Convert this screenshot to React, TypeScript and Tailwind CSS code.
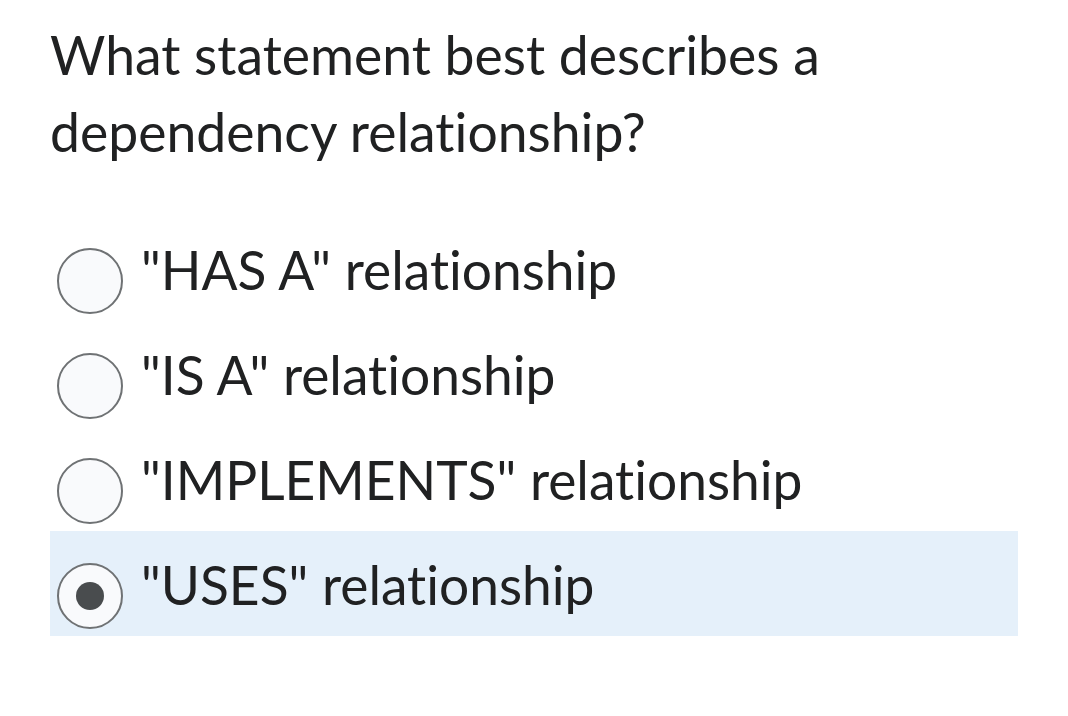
const options = [
  { id: "has-a", label: '"HAS A" relationship' },
  { id: "is-a", label: '"IS A" relationship' },
  { id: "implements", label: '"IMPLEMENTS" relationship' },
  { id: "uses", label: '"USES" relationship' },
]

function Radio({ checked }: { checked: boolean }) {
  return (
    <span className="mt-[32px] flex h-[66px] w-[66px] shrink-0 items-center justify-center rounded-full border-2 border-[#6f7274] bg-[#f9fafc]">
      {checked && <span className="h-[28px] w-[28px] rounded-full bg-[#494c4e]" />}
    </span>
  )
}

export default function App() {
  const selected = "uses"

  return (
    <section
      className="min-h-[716px] w-[1068px] bg-white px-[50px] pt-[16px] text-[#202122] [font-variant-ligatures:none]"
      style={{ fontFamily: "Lato, 'Open Sans', sans-serif" }}
    >
      <h1 className="w-[840px] text-[53.5px] font-normal leading-[77px]">
        What statement best describes a dependency relationship?
      </h1>

      <div className="mt-[46px] w-[968px]">
        {options.map((opt) => (
          <label
            key={opt.id}
            className={
              "flex h-[105px] items-start gap-[18px] pl-[7px] " +
              (opt.id === selected ? "bg-[#e5f0fa]" : "")
            }
          >
            <Radio checked={opt.id === selected} />
            <span className="self-center text-[53.3px] leading-[78px]">{opt.label}</span>
          </label>
        ))}
      </div>
    </section>
  )
}
